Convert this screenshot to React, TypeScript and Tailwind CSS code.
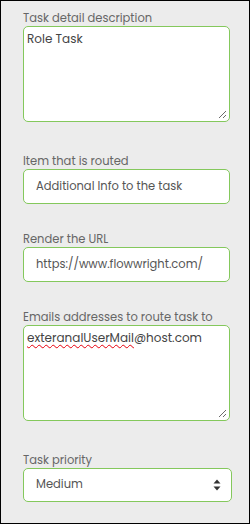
const font = "font-['Poppins','DejaVu_Sans',sans-serif]";

function Grip() {
  return (
    <svg
      className="absolute right-[2px] bottom-[2px]"
      width="9"
      height="9"
      viewBox="0 0 9 9"
      aria-hidden="true"
    >
      <path d="M8 1 L1 8 M8 5 L5 8" stroke="#6b6b6b" strokeWidth="1" />
    </svg>
  );
}

function Label({ children }: { children: React.ReactNode }) {
  return <div className="text-[11.5px] leading-4 text-[#666]">{children}</div>;
}

export default function App() {
  return (
    <div className={`w-[250px] h-[524px] border border-black bg-[#ececec] pl-[22px] pt-[9px] ${font}`}>
      <div className="w-[207px]">
        <Label>Task detail description</Label>
        <div className="relative h-[96px] rounded-[5px] border border-[#84c85c] bg-white px-[3px] pt-[4px] text-[12px] leading-4 text-[#444]">
          Role Task
          <Grip />
        </div>

        <div className="mt-[31px]">
          <Label>Item that is routed</Label>
          <div className="flex h-[35px] items-center rounded-[5px] border border-[#84c85c] bg-white pl-[12px] text-[11.5px] text-[#555]">
            Additional Info to the task
          </div>
        </div>

        <div className="mt-[27px]">
          <Label>Render the URL</Label>
          <div className="flex h-[35px] items-center rounded-[5px] border border-[#84c85c] bg-white pl-[12px] text-[11.5px] text-[#555]">
            https://www.flowwright.com/
          </div>
        </div>

        <div className="mt-[27px]">
          <Label>Emails addresses to route task to</Label>
          <div className="relative h-[96px] rounded-[5px] border border-[#84c85c] bg-white px-[3px] pt-[4px] text-[12px] leading-4 text-[#444]">
            <span className="underline decoration-wavy decoration-red-600 decoration-1 underline-offset-2">
              exteranalUserMail
            </span>
            @host.com
            <Grip />
          </div>
        </div>

        <div className="mt-[31px]">
          <Label>Task priority</Label>
          <div className="flex h-[34px] w-[209px] items-center justify-between rounded-[5px] border border-[#84c85c] bg-white pl-[12px] pr-[10px] text-[11.5px] text-[#555]">
            <span>Medium</span>
            <svg width="8" height="12" viewBox="0 0 8 12" aria-hidden="true">
              <path d="M4 0.5 L7.5 4.5 H0.5 Z M4 11.5 L7.5 7.5 H0.5 Z" fill="#333" />
            </svg>
          </div>
        </div>
      </div>
    </div>
  );
}
